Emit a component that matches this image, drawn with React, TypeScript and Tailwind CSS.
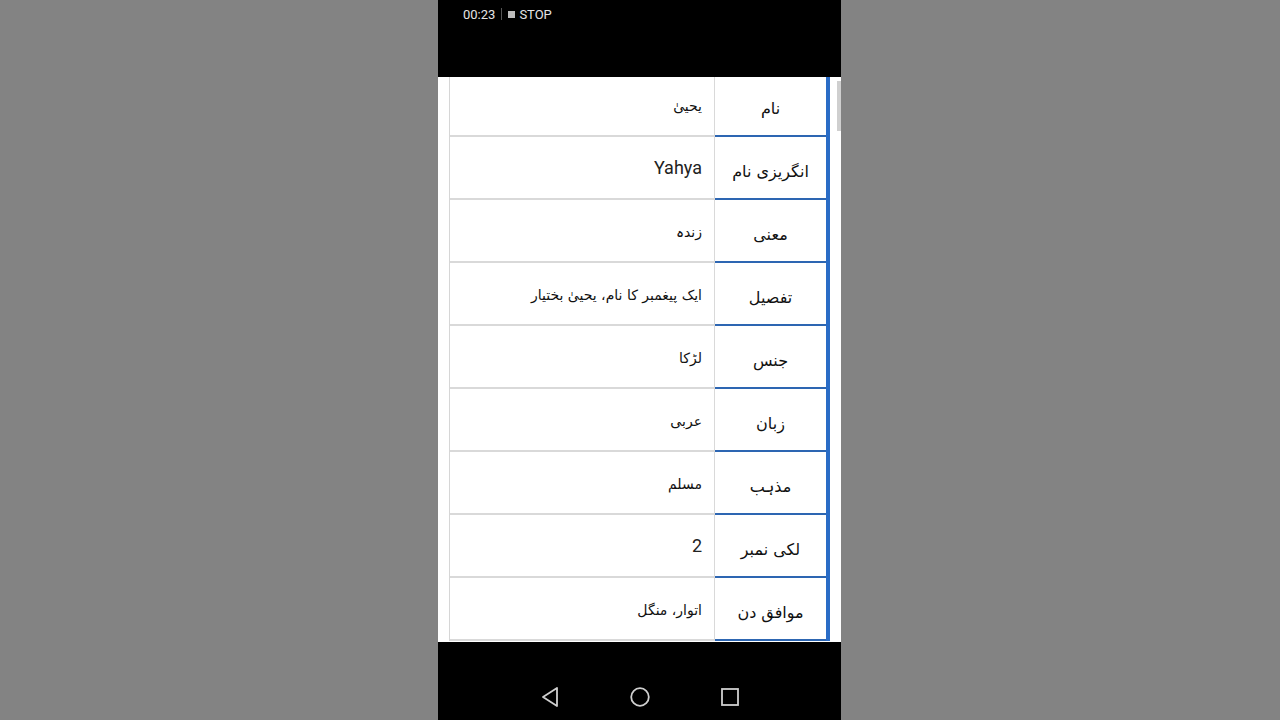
const rows = [
  { label: "نام", value: "یحییٰ" },
  { label: "انگریزی نام", value: "Yahya", latin: true },
  { label: "معنی", value: "زندہ" },
  { label: "تفصیل", value: "ایک پیغمبر کا نام، یحییٰ بختیار" },
  { label: "جنس", value: "لڑکا" },
  { label: "زبان", value: "عربی" },
  { label: "مذہب", value: "مسلم" },
  { label: "لکی نمبر", value: "2", latin: true },
  { label: "موافق دن", value: "اتوار، منگل" },
]

function NavBar() {
  return (
    <div className="flex h-[78px] items-start justify-center gap-[69px] bg-black pt-[44px]">
      <svg width="20" height="22" viewBox="0 0 20 22" fill="none">
        <path d="M17 2 L3 11 L17 20 Z" stroke="#cfcfcf" strokeWidth="1.8" strokeLinejoin="round" />
      </svg>
      <svg width="22" height="22" viewBox="0 0 22 22" fill="none">
        <circle cx="11" cy="11" r="8.8" stroke="#cfcfcf" strokeWidth="1.8" />
      </svg>
      <svg width="20" height="22" viewBox="0 0 20 22" fill="none">
        <rect x="2" y="3" width="16" height="16" stroke="#cfcfcf" strokeWidth="1.8" />
      </svg>
    </div>
  )
}

export default function App() {
  return (
    <div className="flex h-[720px] w-full bg-[#838383] font-['Roboto',sans-serif]">
      <div className="ml-[438px] flex w-[403px] flex-col bg-black">
        {/* status bar */}
        <div className="flex h-[77px] items-start gap-[6px] pl-[25px] pt-[5px] text-[13px] text-[#e4e4e4]">
          <span>00:23</span>
          <span className="mt-[3px] h-[12px] w-px bg-[#555]" />
          <span className="flex items-center gap-[4px]">
            <span className="h-[7px] w-[7px] bg-[#bdbdbd]" />
            STOP
          </span>
        </div>

        {/* table */}
        <div className="relative h-[565px] overflow-hidden bg-white">
          <div className="ml-[11px] mt-[-3px] flex w-[381px] flex-col border-l border-[#d6d6d6]">
            {rows.map((r) => (
              <div key={r.label} className="flex h-[63px]">
                <div className="flex flex-1 items-center justify-end border-b-2 border-r border-[#d9d9d9] pr-[12px]">
                  {r.latin ? (
                    <span className="text-[18px] text-[#222]">{r.value}</span>
                  ) : (
                    <span dir="rtl" className="pt-[4px] font-['DejaVu_Sans',sans-serif] text-[14px] text-[#111]">
                      {r.value}
                    </span>
                  )}
                </div>
                <div className="flex w-[111px] items-center justify-center border-b-2 border-[#2d66b2]">
                  <span dir="rtl" className="pt-[8px] font-['DejaVu_Sans',sans-serif] text-[16px] text-[#111]">
                    {r.label}
                  </span>
                </div>
                <div className="w-[4px] bg-[#2a6cc6]" />
              </div>
            ))}
          </div>
          {/* scrollbar thumb */}
          <div className="absolute right-0 top-[4px] h-[50px] w-[4px] bg-[#cfcfcf]" />
        </div>

        <NavBar />
      </div>
    </div>
  )
}
